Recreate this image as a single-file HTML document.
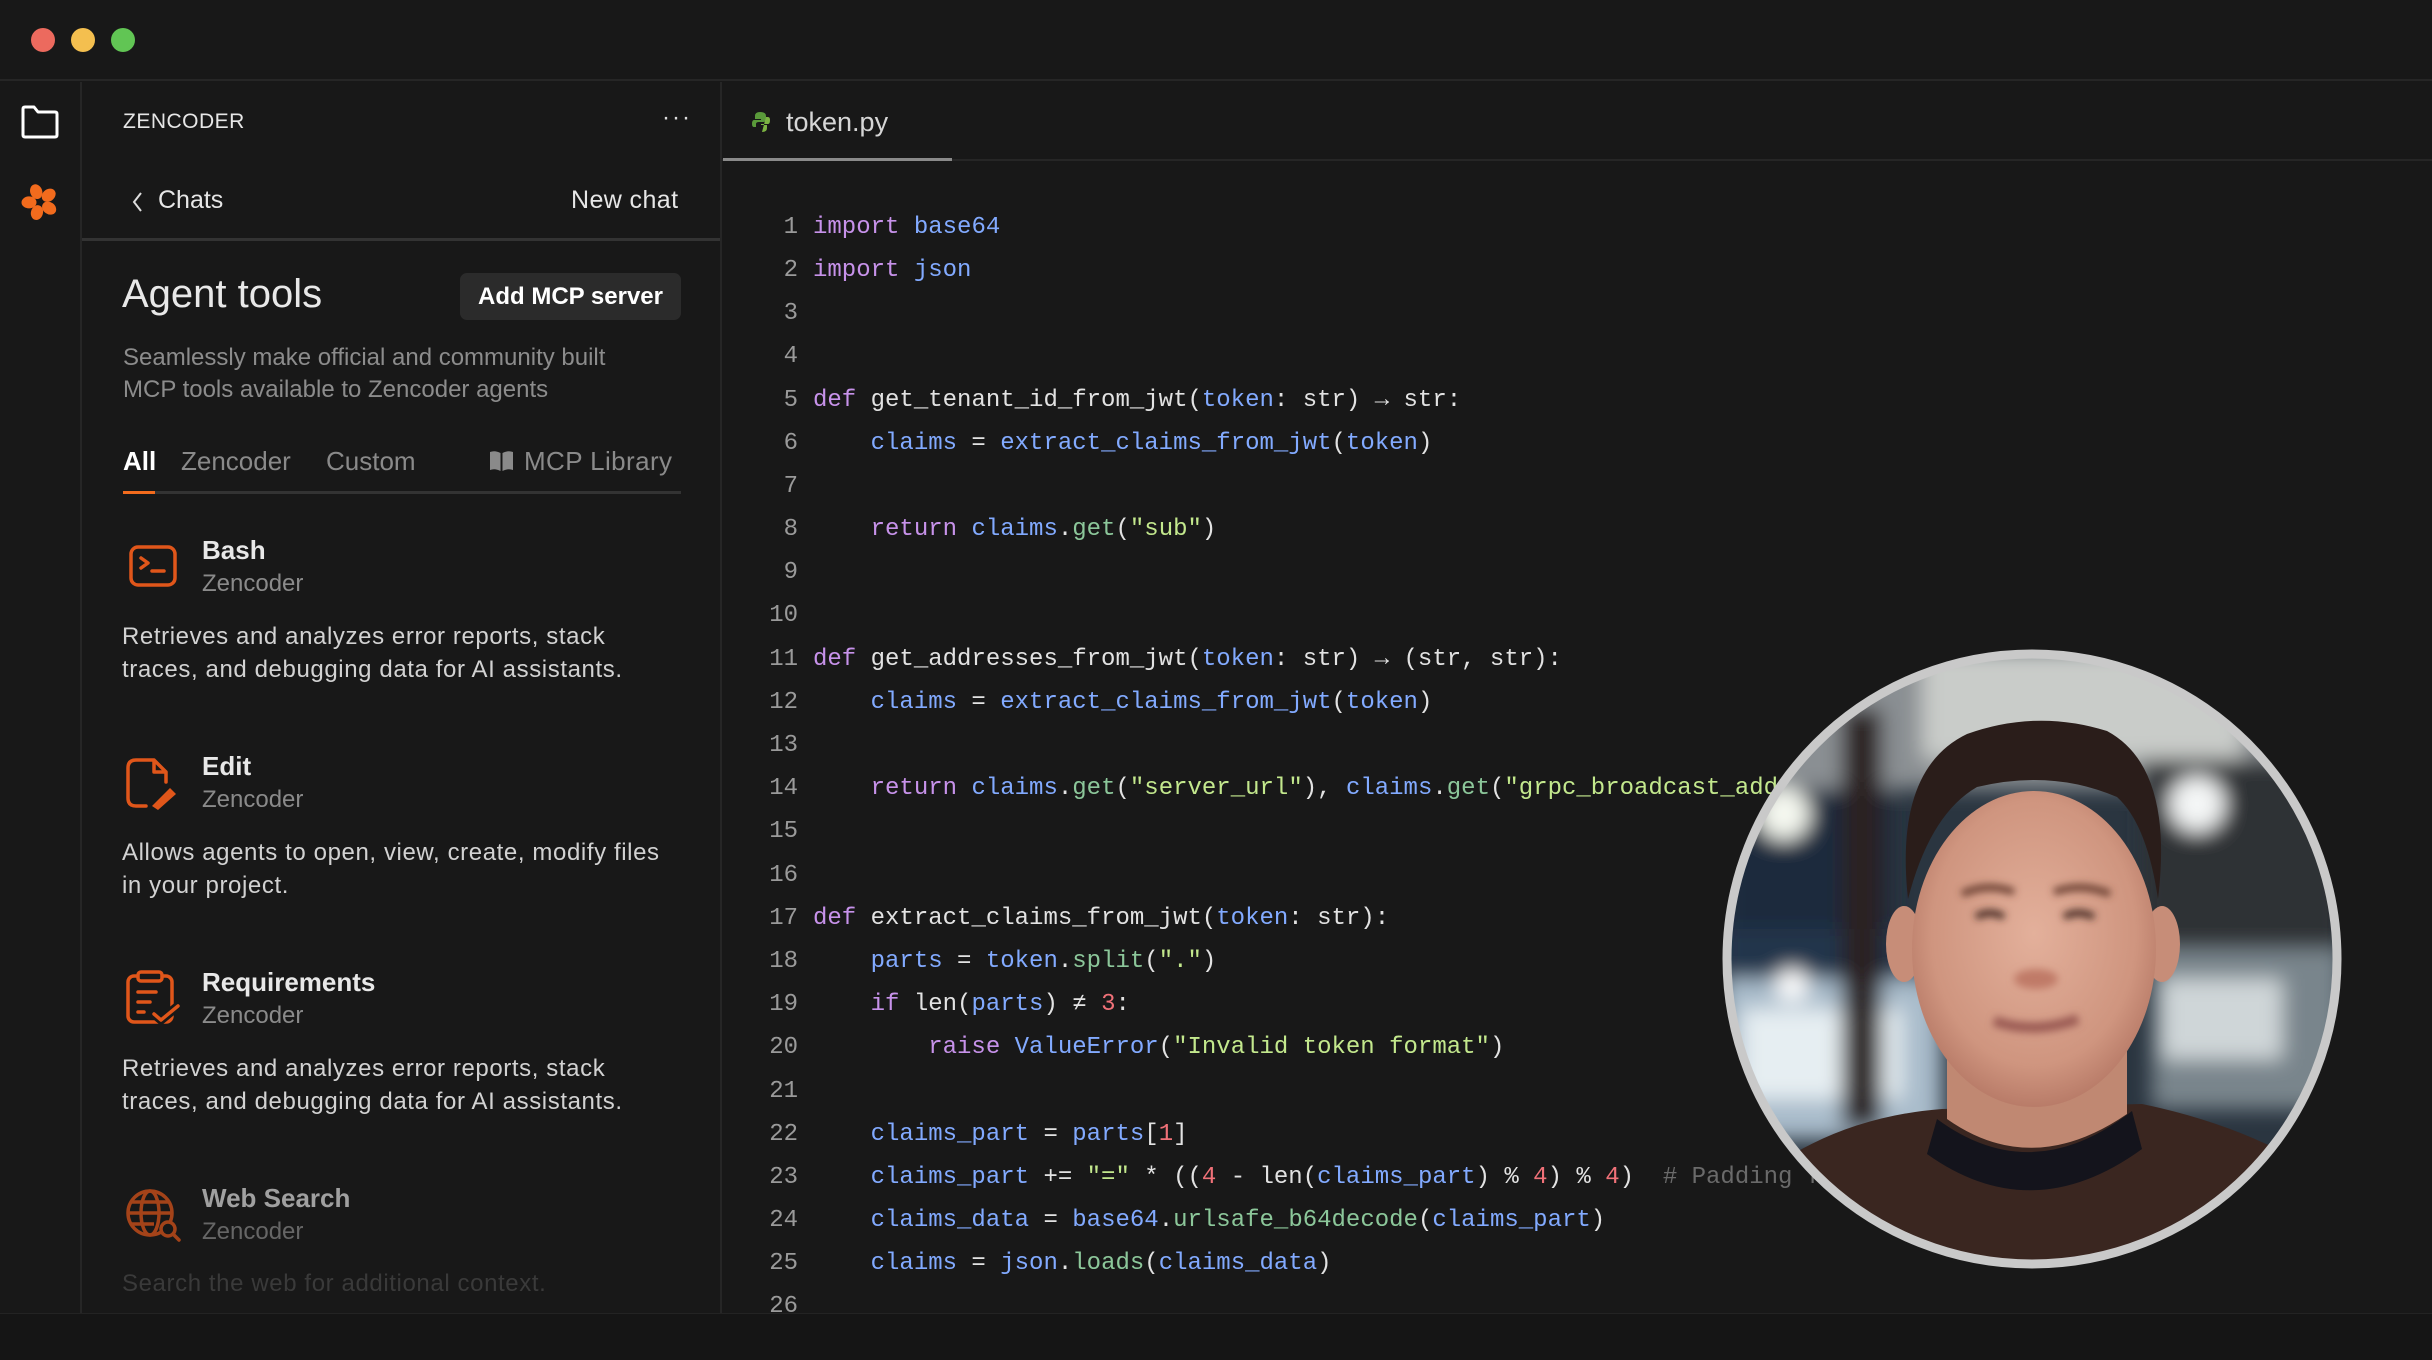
<!DOCTYPE html>
<html><head><meta charset="utf-8"><style>
*{margin:0;padding:0;box-sizing:border-box}
body{width:2432px;height:1360px;background:#181818;overflow:hidden;position:relative;font-family:"Liberation Sans",sans-serif;color:#e6e6e6}
.a{position:absolute;white-space:nowrap}
.code{position:absolute;left:723px;top:162px;width:1709px;height:1151px;overflow:hidden}
.ln{position:absolute;left:0;width:75px;text-align:right;color:#9a9a9a;font:24px "Liberation Mono",monospace}
.cl{position:absolute;left:90px;font:24px "Liberation Mono",monospace;color:#e2e2e2;white-space:pre}
.k{color:#c792ea}.v{color:#82aaff}.f{color:#8cc79a}.s{color:#c3e88d}.n{color:#f07178}.c{color:#6a6a6a}
.t{font-size:26px;font-weight:bold;color:#e8e8e8}
.sub{font-size:24px;color:#8a8a8a}
.d{font-size:24px;color:#d2d2d2;line-height:33px;letter-spacing:0.6px}
</style></head><body>
<div class="a" style="left:0;top:0;width:2432px;height:81px;background:#181818;border-bottom:2px solid #262626"></div>
<div class="a" style="left:31px;top:28px;width:24px;height:24px;border-radius:50%;background:#ec6a5e"></div>
<div class="a" style="left:71px;top:28px;width:24px;height:24px;border-radius:50%;background:#f4bf4f"></div>
<div class="a" style="left:111px;top:28px;width:24px;height:24px;border-radius:50%;background:#61c554"></div>
<div class="a" style="left:80px;top:82px;width:2px;height:1231px;background:#262626"></div>
<svg class="a" style="left:20px;top:105px" width="40" height="34" viewBox="0 0 40 34"><path d="M3 4 Q3 2 5 2 H14 L18 7 H35 Q37 7 37 9 V30 Q37 32 35 32 H5 Q3 32 3 30 Z" fill="none" stroke="#fff" stroke-width="3" stroke-linejoin="round"/></svg>
<svg class="a" style="left:19px;top:181px" width="42" height="42" viewBox="-21 -21 42 42"><g fill="#f26b1d"><ellipse cx="0" cy="-11" rx="6" ry="7.5" transform="rotate(-20)"/><ellipse cx="0" cy="-11" rx="6" ry="7.5" transform="rotate(52)"/><ellipse cx="0" cy="-11" rx="6" ry="7.5" transform="rotate(124)"/><ellipse cx="0" cy="-11" rx="6" ry="7.5" transform="rotate(196)"/><ellipse cx="0" cy="-11" rx="6" ry="7.5" transform="rotate(268)"/></g></svg>
<div class="a" style="left:720px;top:82px;width:2px;height:1231px;background:#262626"></div>
<div class="a" style="left:123px;top:110px;font-size:21px;color:#e6e6e6;letter-spacing:0.5px">ZENCODER</div>
<div class="a" style="left:662px;top:104px;font-size:24px;color:#ddd;letter-spacing:2px">···</div>
<svg class="a" style="left:130px;top:190px" width="14" height="24" viewBox="0 0 14 24"><path d="M11 3 L4 12 L11 21" fill="none" stroke="#ddd" stroke-width="2"/></svg>
<div class="a" style="left:158px;top:186px;font-size:25px;color:#e6e6e6">Chats</div>
<div class="a" style="left:571px;top:186px;font-size:25px;color:#e6e6e6;letter-spacing:0.4px">New chat</div>
<div class="a" style="left:82px;top:238px;width:638px;height:3px;background:#333"></div>
<div class="a" style="left:122px;top:272px;font-size:40px;color:#e8e8e8">Agent tools</div>
<div class="a" style="left:460px;top:273px;width:221px;height:47px;border-radius:7px;background:#2b2b2b;color:#fff;font-size:24px;font-weight:bold;text-align:center;line-height:47px">Add MCP server</div>
<div class="a" style="left:123px;top:342px;font-size:24px;color:#8c8c8c;line-height:32px">Seamlessly make official and community built<br>MCP tools available to Zencoder agents</div>
<div class="a" style="left:123px;top:446px;font-size:26px;color:#fff;font-weight:bold">All</div>
<div class="a" style="left:181px;top:446px;font-size:26px;color:#8a8a8a">Zencoder</div>
<div class="a" style="left:326px;top:446px;font-size:26px;color:#8a8a8a">Custom</div>
<svg class="a" style="left:489px;top:450px" width="25" height="22" viewBox="0 0 25 22"><path d="M1 2 Q6 0 11.5 3 V21 Q6 18 1 20Z M13.5 3 Q19 0 24 2 V20 Q19 18 13.5 21Z" fill="#8a8a8a"/></svg>
<div class="a" style="left:524px;top:446px;font-size:26px;color:#8a8a8a;letter-spacing:0.4px">MCP Library</div>
<div class="a" style="left:123px;top:491px;width:558px;height:3px;background:#333"></div>
<div class="a" style="left:123px;top:491px;width:32px;height:3px;background:#f26b1d"></div>

<svg class="a" style="left:127px;top:541px" width="52" height="52" viewBox="0 0 52 52"><rect x="4" y="6" width="44" height="38" rx="7" fill="none" stroke="#e0561a" stroke-width="3.5"/><path d="M14 17 L21 22 L14 27" fill="none" stroke="#e0561a" stroke-width="3.5" stroke-linecap="round" stroke-linejoin="round"/><path d="M25 30 H37" stroke="#e0561a" stroke-width="3.5" stroke-linecap="round"/></svg>
<div class="a t" style="left:202px;top:535px">Bash</div>
<div class="a sub" style="left:202px;top:570px">Zencoder</div>
<div class="a d" style="left:122px;top:620px">Retrieves and analyzes error reports, stack<br>traces, and debugging data for AI assistants.</div>

<svg class="a" style="left:124px;top:756px" width="56" height="56" viewBox="0 0 56 56"><path d="M22 50 H12 Q4 50 4 42 V12 Q4 4 12 4 H30 L42 16 V26 M30 4 V16 H42" fill="none" stroke="#e0561a" stroke-width="3.5" stroke-linejoin="round" stroke-linecap="round"/><path d="M28 50 L46 32 L52 38 L34 54 Z" fill="#e0561a"/></svg>
<div class="a t" style="left:202px;top:751px">Edit</div>
<div class="a sub" style="left:202px;top:786px">Zencoder</div>
<div class="a d" style="left:122px;top:836px">Allows agents to open, view, create, modify files<br>in your project.</div>

<svg class="a" style="left:124px;top:970px" width="60" height="58" viewBox="0 0 60 58"><rect x="4" y="6" width="44" height="46" rx="6" fill="none" stroke="#e0561a" stroke-width="3.5"/><rect x="14" y="2" width="24" height="9" rx="3" fill="#181818" stroke="#e0561a" stroke-width="3.5"/><path d="M14 22 H32 M14 32 H26 M14 42 H20" stroke="#e0561a" stroke-width="3.5" stroke-linecap="round"/><path d="M30 44 L37 50 L54 36" fill="none" stroke="#181818" stroke-width="9"/><path d="M30 44 L37 50 L54 36" fill="none" stroke="#e0561a" stroke-width="3.5" stroke-linecap="round" stroke-linejoin="round"/></svg>
<div class="a t" style="left:202px;top:967px">Requirements</div>
<div class="a sub" style="left:202px;top:1002px">Zencoder</div>
<div class="a d" style="left:122px;top:1052px">Retrieves and analyzes error reports, stack<br>traces, and debugging data for AI assistants.</div>

<svg class="a" style="left:124px;top:1187px;opacity:0.7" width="60" height="58" viewBox="0 0 60 58"><g fill="none" stroke="#e0561a" stroke-width="3.5"><circle cx="26" cy="26" r="22"/><ellipse cx="26" cy="26" rx="9" ry="22"/><path d="M4 26 H48 M8 15 H44 M8 37 H30"/><circle cx="44" cy="42" r="7" fill="#181818"/><path d="M49 47 L55 53" stroke-linecap="round"/></g></svg>
<div class="a t" style="left:202px;top:1183px;color:#a0a0a0">Web Search</div>
<div class="a sub" style="left:202px;top:1218px;color:#666">Zencoder</div>
<div class="a" style="left:122px;top:1270px;font-size:24px;letter-spacing:0.6px;color:#3a3a3a;height:43px;overflow:hidden">Search the web for additional context.</div>
<div class="a" style="left:82px;top:1295px;width:638px;height:18px;background:linear-gradient(rgba(24,24,24,0),#181818)"></div>

<svg class="a" style="left:752px;top:111px" width="18" height="22" viewBox="0 0 18 22"><path d="M8 1 Q3 1 3 5 V8 H9 V9 H2 Q0 9 0 13 Q0 16 2 16 H4 V13 Q4 11 7 11 H11 Q14 11 14 8 V5 Q14 1 8 1Z" fill="#5a9a3a"/><path d="M10 21 Q15 21 15 17 V14 H9 V13 H16 Q18 13 18 9 Q18 6 16 6 H14" fill="#7cb342"/></svg>
<div class="a" style="left:786px;top:107px;font-size:27px;color:#d6d6d6">token.py</div>
<div class="a" style="left:722px;top:159px;width:1710px;height:2px;background:#262626"></div>
<div class="a" style="left:723px;top:158px;width:229px;height:3px;background:#8a8a8a"></div>

<div class="code">
<div class="ln" style="top:52px">1</div><div class="cl" style="top:52px"><span class="k">import</span> <span class="v">base64</span></div>
<div class="ln" style="top:95px">2</div><div class="cl" style="top:95px"><span class="k">import</span> <span class="v">json</span></div>
<div class="ln" style="top:138px">3</div>
<div class="ln" style="top:181px">4</div>
<div class="ln" style="top:225px">5</div><div class="cl" style="top:225px"><span class="k">def</span> get_tenant_id_from_jwt(<span class="v">token</span>: str) → str:</div>
<div class="ln" style="top:268px">6</div><div class="cl" style="top:268px">    <span class="v">claims</span> = <span class="v">extract_claims_from_jwt</span>(<span class="v">token</span>)</div>
<div class="ln" style="top:311px">7</div>
<div class="ln" style="top:354px">8</div><div class="cl" style="top:354px">    <span class="k">return</span> <span class="v">claims</span>.<span class="f">get</span>(<span class="s">"sub"</span>)</div>
<div class="ln" style="top:397px">9</div>
<div class="ln" style="top:440px">10</div>
<div class="ln" style="top:484px">11</div><div class="cl" style="top:484px"><span class="k">def</span> get_addresses_from_jwt(<span class="v">token</span>: str) → (str, str):</div>
<div class="ln" style="top:527px">12</div><div class="cl" style="top:527px">    <span class="v">claims</span> = <span class="v">extract_claims_from_jwt</span>(<span class="v">token</span>)</div>
<div class="ln" style="top:570px">13</div>
<div class="ln" style="top:613px">14</div><div class="cl" style="top:613px">    <span class="k">return</span> <span class="v">claims</span>.<span class="f">get</span>(<span class="s">"server_url"</span>), <span class="v">claims</span>.<span class="f">get</span>(<span class="s">"grpc_broadcast_address"</span>)</div>
<div class="ln" style="top:656px">15</div>
<div class="ln" style="top:700px">16</div>
<div class="ln" style="top:743px">17</div><div class="cl" style="top:743px"><span class="k">def</span> extract_claims_from_jwt(<span class="v">token</span>: str):</div>
<div class="ln" style="top:786px">18</div><div class="cl" style="top:786px">    <span class="v">parts</span> = <span class="v">token</span>.<span class="f">split</span>(<span class="s">"."</span>)</div>
<div class="ln" style="top:829px">19</div><div class="cl" style="top:829px">    <span class="k">if</span> len(<span class="v">parts</span>) ≠ <span class="n">3</span>:</div>
<div class="ln" style="top:872px">20</div><div class="cl" style="top:872px">        <span class="k">raise</span> <span class="v">ValueError</span>(<span class="s">"Invalid token format"</span>)</div>
<div class="ln" style="top:916px">21</div>
<div class="ln" style="top:959px">22</div><div class="cl" style="top:959px">    <span class="v">claims_part</span> = <span class="v">parts</span>[<span class="n">1</span>]</div>
<div class="ln" style="top:1002px">23</div><div class="cl" style="top:1002px">    <span class="v">claims_part</span> += <span class="s">"="</span> * ((<span class="n">4</span> - len(<span class="v">claims_part</span>) % <span class="n">4</span>) % <span class="n">4</span>)  <span class="c"># Padding for base64</span></div>
<div class="ln" style="top:1045px">24</div><div class="cl" style="top:1045px">    <span class="v">claims_data</span> = <span class="v">base64</span>.<span class="f">urlsafe_b64decode</span>(<span class="v">claims_part</span>)</div>
<div class="ln" style="top:1088px">25</div><div class="cl" style="top:1088px">    <span class="v">claims</span> = <span class="v">json</span>.<span class="f">loads</span>(<span class="v">claims_data</span>)</div>
<div class="ln" style="top:1131px">26</div>
</div>
<div class="a" style="left:0;top:1313px;width:2432px;height:47px;background:#151515;border-top:1px solid #232323"></div>

<svg class="a" style="left:1722px;top:649px" width="620" height="620" viewBox="0 0 620 620">
<defs>
<clipPath id="cc"><circle cx="310" cy="310" r="302"/></clipPath>
<filter id="bl"><feGaussianBlur stdDeviation="10"/></filter>
<filter id="bl2"><feGaussianBlur stdDeviation="4"/></filter>
<radialGradient id="skin" cx="50%" cy="45%" r="60%"><stop offset="0" stop-color="#e3b09b"/><stop offset="0.7" stop-color="#cf957f"/><stop offset="1" stop-color="#b07260"/></radialGradient>
</defs>
<g clip-path="url(#cc)">
<rect width="620" height="620" fill="#2a3540"/>
<g filter="url(#bl)">
<rect x="0" y="0" width="620" height="140" fill="#8a8f93"/>
<rect x="200" y="0" width="320" height="110" fill="#c9ccc9"/>
<rect x="0" y="140" width="170" height="150" fill="#1e2c3c"/>
<rect x="0" y="280" width="200" height="60" fill="#23364c"/>
<rect x="0" y="330" width="220" height="160" fill="#a9bccb"/>
<rect x="20" y="360" width="160" height="90" fill="#e6eef2"/>
<rect x="420" y="110" width="200" height="200" fill="#2d3236"/>
<rect x="430" y="300" width="190" height="160" fill="#79858c"/>
<rect x="440" y="330" width="120" height="80" fill="#cfd6d8"/>
<rect x="120" y="60" width="40" height="420" fill="#2a2420"/>
<circle cx="62" cy="165" r="26" fill="#f5f8f0"/>
<circle cx="475" cy="155" r="28" fill="#f4f6f6"/>
<circle cx="70" cy="336" r="16" fill="#fff"/>
</g>
<path d="M0 640 L0 560 Q90 470 220 460 L420 455 Q540 480 620 540 L620 640 Z" fill="#3a2620"/>
<path d="M215 470 Q310 540 410 462 L420 500 Q310 580 205 505 Z" fill="#14141c"/>
<path d="M225 380 L225 470 Q310 530 405 465 L405 380 Z" fill="#c08872"/>
<ellipse cx="182" cy="295" rx="18" ry="38" fill="#c78d78"/>
<ellipse cx="440" cy="295" rx="18" ry="38" fill="#c78d78"/>
<ellipse cx="312" cy="300" rx="122" ry="158" fill="url(#skin)"/>
<path d="M186 250 Q172 120 245 85 Q315 60 385 82 Q452 118 436 250 Q425 175 395 148 Q330 120 255 138 Q208 165 186 250Z" fill="#2a1d1a"/>
<g filter="url(#bl2)">
<path d="M254 268 Q268 260 282 268" stroke="#4a2e26" stroke-width="7" fill="none"/>
<path d="M342 268 Q356 260 372 268" stroke="#4a2e26" stroke-width="7" fill="none"/>
<path d="M240 245 Q265 233 292 243" stroke="#6a4030" stroke-width="7" fill="none"/>
<path d="M332 243 Q360 233 388 245" stroke="#6a4030" stroke-width="7" fill="none"/>
<path d="M272 372 Q312 386 356 370" stroke="#9a5a52" stroke-width="10" fill="none"/>
<ellipse cx="314" cy="330" rx="22" ry="10" fill="#c07a68"/>
</g>
</g>
<circle cx="310" cy="310" r="305" fill="none" stroke="#c9c9c9" stroke-width="9"/>
</svg>
</body></html>
